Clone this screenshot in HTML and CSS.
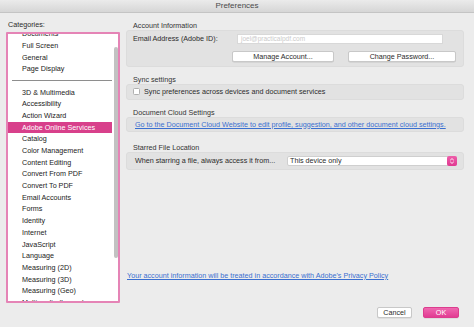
FILE: index.html
```html
<!DOCTYPE html>
<html lang="en">
<head>
    <meta charset="UTF-8">
    <meta name="viewport" content="width=device-width, initial-scale=1.0">
    <title>Preferences</title>
    <link rel="stylesheet" href="styles.css">
</head>
<body>
    <div class="titlebar">Preferences</div>
    <div class="main">
        <div class="categories">
            <div class="cat-label">Categories:</div>
            <div class="list">
                <ul class="items">
                    <li>Documents</li>
                    <li>Full Screen</li>
                    <li>General</li>
                    <li>Page Display</li>
                    <li class="sep"><span></span></li>
                    <li>3D &amp; Multimedia</li>
                    <li>Accessibility</li>
                    <li>Action Wizard</li>
                    <li class="selected">Adobe Online Services</li>
                    <li>Catalog</li>
                    <li>Color Management</li>
                    <li>Content Editing</li>
                    <li>Convert From PDF</li>
                    <li>Convert To PDF</li>
                    <li>Email Accounts</li>
                    <li>Forms</li>
                    <li>Identity</li>
                    <li>Internet</li>
                    <li>JavaScript</li>
                    <li>Language</li>
                    <li>Measuring (2D)</li>
                    <li>Measuring (3D)</li>
                    <li>Measuring (Geo)</li>
                    <li>Multimedia (legacy)</li>
                </ul>
                <div class="thumb"></div>
            </div>
        </div>

        <div class="panel">
            <div class="group">
                <div class="group-label">Account Information</div>
                <div class="box account">
                    <div class="field-row">
                        <span class="field-label">Email Address (Adobe ID):</span>
                        <div class="input">joel@practicalpdf.com</div>
                    </div>
                    <div class="btn-row">
                        <div class="btn manage">Manage Account...</div>
                        <div class="btn change">Change Password...</div>
                    </div>
                </div>
            </div>

            <div class="group">
                <div class="group-label">Sync settings</div>
                <div class="box sync">
                    <span class="checkbox"></span>
                    <span>Sync preferences across devices and document services</span>
                </div>
            </div>

            <div class="group">
                <div class="group-label">Document Cloud Settings</div>
                <div class="box cloud">
                    <a class="link">Go to the Document Cloud Website to edit profile, suggestion, and other document cloud settings.</a>
                </div>
            </div>

            <div class="group starred-group">
                <div class="group-label">Starred File Location</div>
                <div class="box starred">
                    <span>When starring a file, always access it from...</span>
                    <div class="select">
                        <span>This device only</span>
                        <span class="stepper">
                            <svg width="6" height="8" viewBox="0 0 6 8">
                                <path d="M1.2 3.2 L3 1.6 L4.8 3.2 M1.2 4.8 L3 6.4 L4.8 4.8" fill="none" stroke="#fff" stroke-width="0.9"/>
                            </svg>
                        </span>
                    </div>
                </div>
            </div>

            <a class="link privacy">Your account information will be treated in accordance with Adobe's Privacy Policy</a>
        </div>
    </div>
    <div class="footer">
        <div class="btn cancel">Cancel</div>
        <div class="btn ok">OK</div>
    </div>
</body>
</html>
```

FILE: styles.css
```css
* {
    box-sizing: border-box;
}
body {
    margin: 0;
    width: 474px;
    height: 327px;
    overflow: hidden;
    background: #ececec;
    font-family: "Liberation Sans", Arial, sans-serif;
    font-size: 7.2px;
    color: #2b2b2b;
}
.titlebar {
    height: 13px;
    background: linear-gradient(#ebebeb, #d6d6d6);
    border-bottom: 1px solid #c4c4c4;
    text-align: center;
    font-size: 8px;
    line-height: 12px;
    color: #4a4a4a;
}
.main {
    display: flex;
    height: 290px;
}
.categories {
    width: 120px;
    padding: 6.5px 0 0 6px;
    display: flex;
    flex-direction: column;
}
.cat-label {
    line-height: 9px;
    padding-left: 2px;
    margin-bottom: 3.5px;
}
.list {
    position: relative;
    flex: 1;
    background: #fff;
    border: 2px solid #e584b6;
    border-radius: 1px;
    overflow: hidden;
}
.items {
    list-style: none;
    margin: -5.85px 0 0;
    padding: 0 6px 0 0;
    color: #222;
}
.items li {
    height: 11.7px;
    line-height: 11.7px;
    padding-left: 14px;
    white-space: nowrap;
}
.items li.selected {
    background: #d8408b;
    color: #fff;
}
.items li.sep {
    display: flex;
    align-items: center;
    padding-left: 4px;
}
.items li.sep span {
    flex: 1;
    height: 1px;
    background: #8e8e8e;
}
.thumb {
    position: absolute;
    right: 0.5px;
    top: 13px;
    width: 4px;
    height: 211px;
    background: #c2c2c2;
    border-radius: 2px;
}
.panel {
    width: 338px;
    margin-left: 6px;
    padding-top: 7.5px;
    display: flex;
    flex-direction: column;
}
.group + .group {
    margin-top: 8px;
}
.group.starred-group {
    margin-top: 11px;
}
.group-label {
    line-height: 9px;
    padding-left: 7px;
    color: #333;
}
.box {
    background: #e2e2e2;
    border: 1px solid #dcdcdc;
    border-radius: 3px;
}
.account {
    height: 37px;
    padding: 3px 7px 0 6px;
}
.field-row {
    display: flex;
    align-items: center;
    height: 10px;
}
.field-label {
    width: 104px;
}
.input {
    width: 206px;
    height: 10px;
    background: #fff;
    border: 1px solid #d8d8d8;
    color: #cacaca;
    font-size: 6.5px;
    line-height: 8px;
    padding-left: 3px;
}
.btn-row {
    display: flex;
    justify-content: flex-end;
    gap: 14px;
    margin-top: 7px;
}
.btn {
    height: 11px;
    background: #fff;
    border: 1px solid #c8c8c8;
    border-radius: 2px;
    box-shadow: 0 0.5px 0.5px rgba(0, 0, 0, 0.12);
    text-align: center;
    line-height: 9px;
    color: #2b2b2b;
}
.manage {
    width: 102px;
}
.change {
    width: 108px;
}
.sync {
    height: 16px;
    display: flex;
    align-items: center;
    gap: 4px;
    padding-left: 6px;
}
.checkbox {
    width: 7px;
    height: 7px;
    background: #fff;
    border: 1px solid #b0b0b0;
    border-radius: 1.5px;
}
.cloud {
    height: 15px;
    display: flex;
    align-items: center;
    padding-left: 8px;
}
.link {
    color: #3a6fd0;
    text-decoration: underline;
    white-space: nowrap;
}
.starred {
    height: 18px;
    display: flex;
    align-items: center;
    padding: 0 6px 0 8px;
}
.select {
    margin-left: auto;
    width: 170px;
    height: 10px;
    display: flex;
    align-items: center;
    background: #fff;
    border: 1px solid #cfcfcf;
    border-radius: 2px;
    padding-left: 2px;
}
.stepper {
    margin: -1px -1px -1px auto;
    align-self: stretch;
    width: 10px;
    background: linear-gradient(#ee5eaa, #e03891);
    border-radius: 2px;
    display: flex;
    align-items: center;
    justify-content: center;
}
.privacy {
    display: block;
    margin-top: 101px;
    line-height: 9px;
    padding-left: 1px;
}
.footer {
    display: flex;
    justify-content: flex-end;
    gap: 11px;
    padding: 4px 15px 0 0;
}
.cancel {
    width: 35px;
}
.ok {
    width: 36px;
    background: linear-gradient(#ef68b0, #e23c93);
    border-color: #dc3d8e;
    color: #fff;
}
```
